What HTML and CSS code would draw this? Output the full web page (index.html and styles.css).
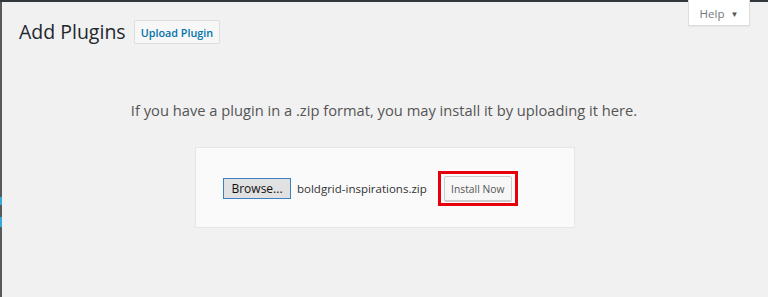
FILE: index.html
```html
<!DOCTYPE html>
<html>
<head>
<meta charset="utf-8">
<link rel="stylesheet" href="styles.css">
</head>
<body>
<div class="topbar"></div>
<div class="frame">
  <div class="sidebar">
    <span class="mark mark1"></span>
    <span class="mark mark2"></span>
  </div>
  <div class="content">
    <div class="help-wrap"><div class="help-tab">Help <span class="caret">▼</span></div></div>
    <div class="header">
      <h1 class="title">Add Plugins</h1>
      <span class="upload-btn">Upload Plugin</span>
    </div>
    <p class="intro">If you have a plugin in a .zip format, you may install it by uploading it here.</p>
    <div class="upload-box">
      <span class="browse">Browse...</span>
      <span class="filename">boldgrid-inspirations.zip</span>
      <span class="highlight"><span class="install">Install Now</span></span>
    </div>
  </div>
</div>
</body>
</html>
```
FILE: styles.css
```css
* { box-sizing: border-box; }
html, body { margin: 0; padding: 0; }
body {
  width: 768px;
  height: 297px;
  overflow: hidden;
  background: #f1f1f1;
  font-family: "Open Sans", "Noto Sans", sans-serif;
  color: #444;
}
.topbar { height: 2px; background: #32373c; }
.frame { display: flex; height: 295px; }
.sidebar {
  width: 2px;
  background: #555a5f;
  display: flex;
  flex-direction: column;
}
.mark { display: block; width: 2px; background: #36a9d8; }
.mark1 { margin-top: 195px; height: 8px; }
.mark2 { margin-top: 12px; height: 10px; }
.content { flex: 1; position: relative; }
.help-wrap { position: absolute; top: -2px; right: 18px; }
.help-tab {
  width: 62px;
  height: 26px;
  background: #fff;
  border: 1px solid #ddd;
  border-top: none;
  box-shadow: 0 1px 1px rgba(0,0,0,0.04);
  font-size: 11.5px;
  color: #72777c;
  display: flex;
  align-items: center;
  justify-content: center;
  gap: 6px;
  padding-top: 1px;
}
.caret { font-size: 8px; color: #555; }
.header {
  display: flex;
  align-items: center;
  gap: 8px;
  padding: 16px 0 0 17px;
}
.title {
  margin: 0;
  font-weight: 400;
  font-size: 19.5px;
  color: #23282d;
  line-height: 28px;
}
.upload-btn {
  display: inline-flex;
  align-items: center;
  height: 24px;
  padding: 0 6px;
  background: #f7f7f7;
  border: 1px solid #ddd;
  border-radius: 2px;
  color: #0073aa;
  font-weight: 600;
  font-size: 10.8px;
}
.intro {
  margin: 54px 0 0 0;
  text-align: center;
  font-size: 14.7px;
  color: #555;
  padding-right: 2px;
}
.upload-box {
  margin: 27px 0 0 193px;
  width: 380px;
  height: 81px;
  background: #fafafa;
  border: 1px solid #e6e6e6;
  display: flex;
  align-items: center;
  padding-left: 27px;
  padding-top: 2px;
}
.browse {
  display: inline-flex;
  align-items: center;
  justify-content: center;
  width: 68px;
  height: 21px;
  background: #e1e1e1;
  border: 1px solid #3c80c4;
  font-size: 12px;
  color: #111;
}
.filename {
  margin-left: 6px;
  font-size: 11.5px;
  color: #333;
}
.highlight {
  margin-left: 11px;
  width: 80px;
  height: 35px;
  border: 3px solid #e5000b;
  display: flex;
  align-items: center;
  justify-content: center;
}
.install {
  display: inline-flex;
  align-items: center;
  justify-content: center;
  width: 68px;
  height: 25px;
  background: #f7f7f7;
  border: 1px solid #ccc;
  border-radius: 2px;
  box-shadow: 0 1px 0 #ccc;
  font-size: 10.3px;
  color: #555;
}
```
